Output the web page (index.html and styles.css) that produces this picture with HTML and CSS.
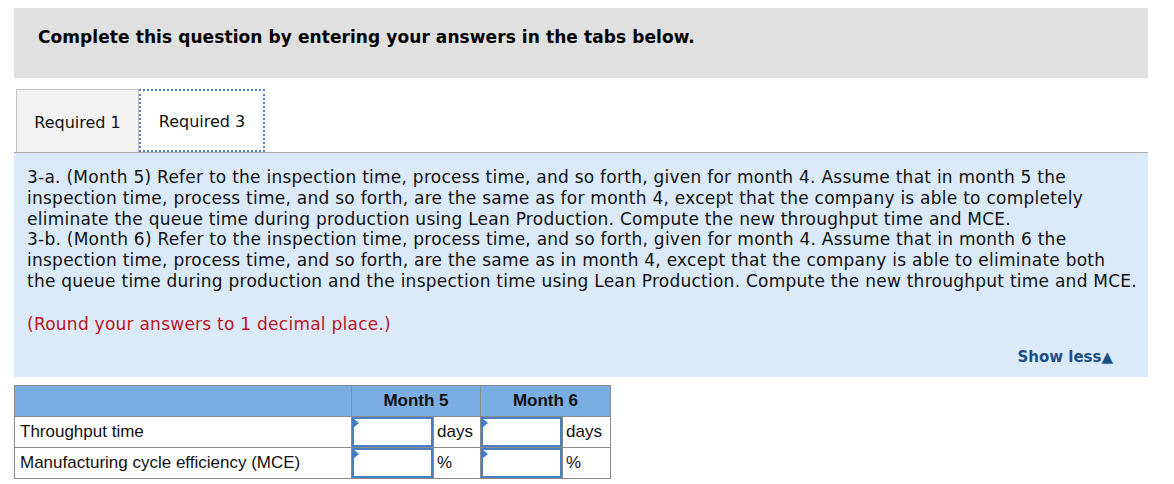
FILE: index.html
```html
<!DOCTYPE html>
<html lang="en">
<head>
    <meta charset="UTF-8">
    <title>Required 3</title>
    <link rel="stylesheet" href="styles.css">
</head>
<body>
    <div class="page">
        <!-- Bandeau consigne -->
        <div class="consigne">
            <h3>Complete this question by entering your answers in the tabs below.</h3>
        </div>

        <!-- Onglets -->
        <div class="tabs">
            <div class="tab">Required 1</div>
            <div class="tab active">Required 3</div>
        </div>

        <!-- Enonce -->
        <div class="enonce">
            <p>3-a. (Month 5) Refer to the inspection time, process time, and so forth, given for month 4. Assume that in month 5 the inspection time, process time, and so forth, are the same as for month 4, except that the company is able to completely eliminate the queue time during production using Lean Production. Compute the new throughput time and MCE.<br>
            3-b. (Month 6) Refer to the inspection time, process time, and so forth, given for month 4. Assume that in month 6 the inspection time, process time, and so forth, are the same as in month 4, except that the company is able to eliminate both the&nbsp;queue time during production and the inspection time using Lean Production. Compute the new throughput time and MCE.</p>
            <p class="arrondi">(Round your answers to 1 decimal place.)</p>
            <div class="show-less">Show less&#9650;</div>
        </div>

        <!-- Tableau reponses -->
        <table class="reponses">
            <colgroup>
                <col style="width: 337px">
                <col style="width: 82px">
                <col style="width: 47px">
                <col style="width: 82px">
                <col style="width: 48px">
            </colgroup>
            <tr>
                <th></th>
                <th colspan="2">Month 5</th>
                <th colspan="2">Month 6</th>
            </tr>
            <tr>
                <td class="label">Throughput time</td>
                <td class="saisie"><input type="text"></td>
                <td class="unite">days</td>
                <td class="saisie"><input type="text"></td>
                <td class="unite">days</td>
            </tr>
            <tr>
                <td class="label">Manufacturing cycle efficiency (MCE)</td>
                <td class="saisie"><input type="text"></td>
                <td class="unite">%</td>
                <td class="saisie"><input type="text"></td>
                <td class="unite">%</td>
            </tr>
        </table>
    </div>
</body>
</html>
```

FILE: styles.css
```css
body { margin: 0; background: white; color: #111; font-family: "DejaVu Sans", Verdana, sans-serif; }
.page { width: 1134px; padding: 8px 0 0 14px; }

.consigne {
    background-color: #e0e0e0;
    height: 70px;
    box-sizing: border-box;
    padding: 18px 0 0 24px;
}
.consigne h3 { margin: 0; font-size: 17px; line-height: 22px; font-weight: bold; color: #000; letter-spacing: 0.08px; }

.tabs { display: flex; margin: 11px 0 0 2px; }
.tab {
    height: 63px;
    display: flex;
    align-items: center;
    justify-content: center;
    font-size: 16px;
    color: #111;
    box-sizing: border-box;
    padding-top: 2px;
}
.tab:first-child {
    width: 123px;
    background-color: #f2f2f2;
    border: 1px solid #c4c4c4;
    border-bottom: none;
}
.tab.active {
    width: 126px;
    background-color: white;
    border: 2px dotted #4a7fc4;
}

.enonce {
    background-color: #dbeaf9;
    border-top: 1px solid #a9a9a9;
    padding: 14px 1px 10px 13px;
    font-size: 17px;
    line-height: 20.8px;
    letter-spacing: 0.25px;
    color: #111;
}
.enonce p { margin: 0; }
.enonce .arrondi { color: #c0131e; margin-top: 22px; }
.show-less {
    text-align: right;
    margin: 12px 34px 0 0;
    font-size: 15px;
    font-weight: bold;
    letter-spacing: 0;
    color: #1c4f85;
}

/* Tableau */
.reponses {
    margin-top: 8px;
    border-collapse: collapse;
    table-layout: fixed;
    width: 596px;
    font-family: "Liberation Sans", Arial, sans-serif;
    font-size: 17px;
    color: #111;
}
.reponses th, .reponses td { border: 1px solid #8a8a8a; padding: 0; }
.reponses th {
    background-color: #7aade1;
    height: 30px;
    font-weight: bold;
    text-align: center;
}
.reponses td { height: 30px; }
.reponses td.label { padding-left: 5px; }
.reponses td.saisie { position: relative; }
.reponses td.unite { padding-left: 3px; }
.saisie input {
    display: block;
    box-sizing: border-box;
    width: 100%;
    height: 30px;
    margin: 0;
    border: 2px solid #4a80c2;
    background: white;
}
.saisie::before {
    content: "";
    position: absolute;
    left: 1px;
    top: 1px;
    border-left: 6px solid #3f7fc6;
    border-top: 5px solid transparent;
    border-bottom: 5px solid transparent;
}
```
